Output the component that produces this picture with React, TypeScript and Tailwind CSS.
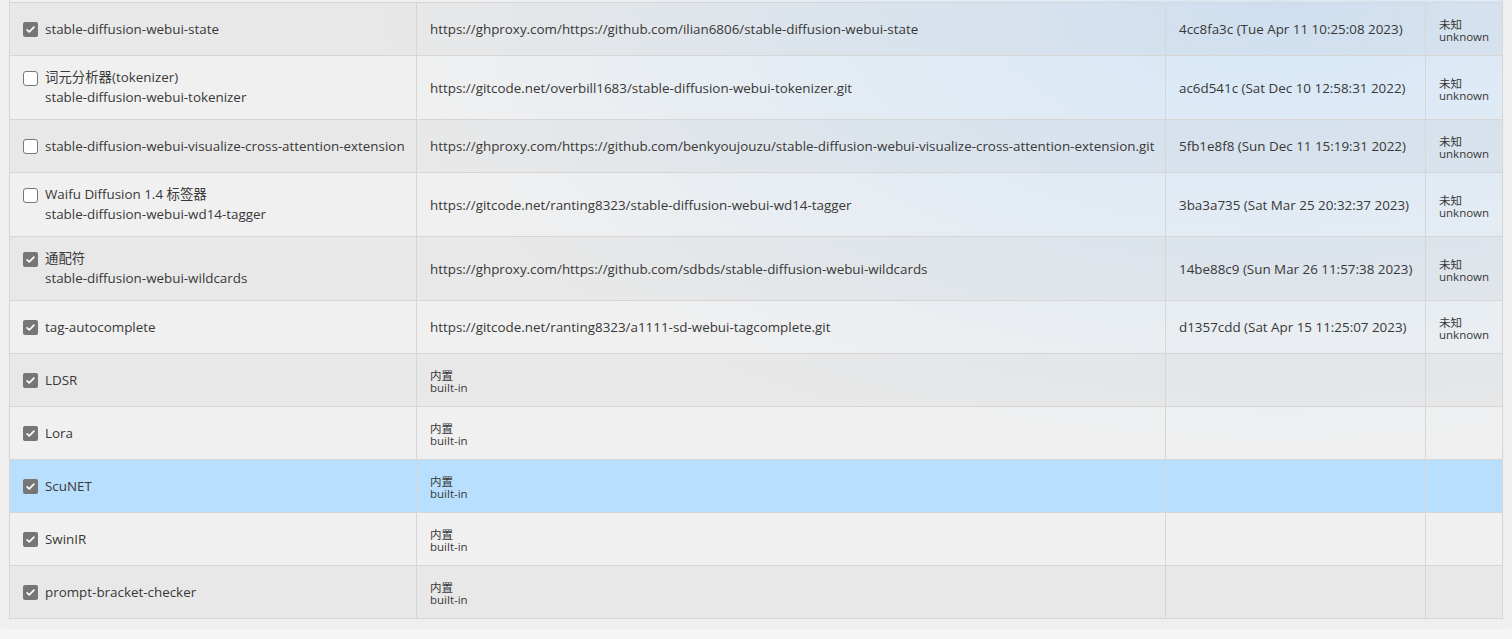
import React from 'react';

type Row = {
  checked: boolean;
  title?: string;
  name: string;
  url?: string;
  version?: string;
  highlight?: boolean;
};

const rows: Row[] = [
  {
    checked: true,
    name: 'stable-diffusion-webui-state',
    url: 'https://ghproxy.com/https://github.com/ilian6806/stable-diffusion-webui-state',
    version: '4cc8fa3c (Tue Apr 11 10:25:08 2023)',
  },
  {
    checked: false,
    title: '词元分析器(tokenizer)',
    name: 'stable-diffusion-webui-tokenizer',
    url: 'https://gitcode.net/overbill1683/stable-diffusion-webui-tokenizer.git',
    version: 'ac6d541c (Sat Dec 10 12:58:31 2022)',
  },
  {
    checked: false,
    name: 'stable-diffusion-webui-visualize-cross-attention-extension',
    url: 'https://ghproxy.com/https://github.com/benkyoujouzu/stable-diffusion-webui-visualize-cross-attention-extension.git',
    version: '5fb1e8f8 (Sun Dec 11 15:19:31 2022)',
  },
  {
    checked: false,
    title: 'Waifu Diffusion 1.4 标签器',
    name: 'stable-diffusion-webui-wd14-tagger',
    url: 'https://gitcode.net/ranting8323/stable-diffusion-webui-wd14-tagger',
    version: '3ba3a735 (Sat Mar 25 20:32:37 2023)',
  },
  {
    checked: true,
    title: '通配符',
    name: 'stable-diffusion-webui-wildcards',
    url: 'https://ghproxy.com/https://github.com/sdbds/stable-diffusion-webui-wildcards',
    version: '14be88c9 (Sun Mar 26 11:57:38 2023)',
  },
  {
    checked: true,
    name: 'tag-autocomplete',
    url: 'https://gitcode.net/ranting8323/a1111-sd-webui-tagcomplete.git',
    version: 'd1357cdd (Sat Apr 15 11:25:07 2023)',
  },
  { checked: true, name: 'LDSR' },
  { checked: true, name: 'Lora' },
  { checked: true, name: 'ScuNET', highlight: true },
  { checked: true, name: 'SwinIR' },
  { checked: true, name: 'prompt-bracket-checker' },
];

const Check = ({ checked }: { checked: boolean }) =>
  checked ? (
    <span className="inline-flex h-[15px] w-[15px] shrink-0 items-center justify-center rounded-[2px] bg-[#767676]">
      <svg viewBox="0 0 16 16" className="h-[11px] w-[11px]" fill="none" stroke="#fff" strokeWidth={2.4} strokeLinecap="round" strokeLinejoin="round">
        <path d="M3 8.5l3.2 3L13 4.5" />
      </svg>
    </span>
  ) : (
    <span className="inline-block h-[15px] w-[15px] shrink-0 rounded-[3px] border border-[#767676] bg-white" />
  );

// two-line small label, e.g. 内置 / built-in
const Small = ({ zh, en }: { zh: string; en: string }) => (
  <div className="flex h-[28px] flex-col justify-center pt-[4px] text-[11.5px] leading-[12px]">
    <div>{zh}</div>
    <div>{en}</div>
  </div>
);

export default function App() {
  return (
    <div className="min-h-screen bg-[#f5f5f5] font-['Open_Sans','Noto_Sans_CJK_SC',sans-serif] text-[13.4px] text-[#383838]">
      <div className="rounded-b-[4px] bg-[#efefef] px-[9px] pb-[10px]">
        <div className="relative bg-[#f0f0f0]">
          <div className="pointer-events-none absolute inset-0 bg-[radial-gradient(ellipse_60%_75%_at_85%_0%,rgba(205,228,250,0.75),rgba(205,228,250,0)_100%)]" />
          <div className="relative h-[2px] border-x border-[#d6d6d6]" />
          <table className="relative w-full table-fixed border-collapse">
            <colgroup>
              <col className="w-[407px]" />
              <col className="w-[749px]" />
              <col className="w-[260px]" />
              <col />
            </colgroup>
            <tbody>
              {rows.map((r, i) => (
                <tr
                  key={r.name}
                  className={
                    r.highlight
                      ? 'bg-[#b8dffd]'
                      : i % 2 === 0
                        ? 'bg-black/[0.03]'
                        : 'bg-transparent'
                  }
                >
                  <td className="border border-[#d6d6d6] px-[13px] py-3 align-middle">
                    <div className="flex items-start gap-[7px]">
                      <div className="flex h-5 items-center">
                        <Check checked={r.checked} />
                      </div>
                      <div className="whitespace-nowrap leading-5">
                        {r.title && <div className="leading-[19px]">{r.title}</div>}
                        <div>{r.name}</div>
                      </div>
                    </div>
                  </td>
                  <td className="border border-[#d6d6d6] px-[13px] py-3 align-middle">
                    {r.url ? (
                      <div className="whitespace-nowrap leading-5">{r.url}</div>
                    ) : (
                      <Small zh="内置" en="built-in" />
                    )}
                  </td>
                  <td className="border border-[#d6d6d6] px-[13px] py-3 align-middle">
                    {r.version && <div className="whitespace-nowrap leading-5">{r.version}</div>}
                  </td>
                  <td className="border border-[#d6d6d6] px-[13px] py-3 align-middle">
                    {r.url && <Small zh="未知" en="unknown" />}
                  </td>
                </tr>
              ))}
            </tbody>
          </table>
        </div>
      </div>
    </div>
  );
}
